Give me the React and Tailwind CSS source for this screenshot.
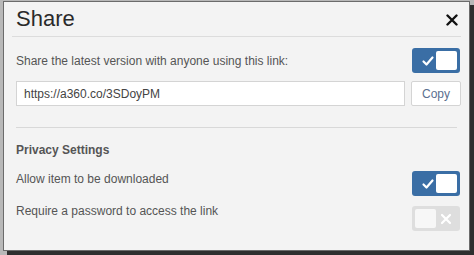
import React from "react";

function Toggle({ on }) {
  if (on) {
    return (
      <div className="w-[48px] h-[25px] rounded-[3px] bg-[#3a6ea5] flex items-center justify-between px-[3px]">
        <svg width="14" height="14" viewBox="0 0 14 14" className="ml-[6px]">
          <path d="M2.5 7.5 L5.5 10.5 L11.5 3.5" stroke="#fff" strokeWidth="2.2" fill="none" strokeLinecap="round" strokeLinejoin="round" />
        </svg>
        <div className="w-[21px] h-[19px] rounded-[2px] bg-white" />
      </div>
    );
  }
  return (
    <div className="w-[48px] h-[25px] rounded-[3px] bg-[#dedede] flex items-center justify-between px-[3px]">
      <div className="w-[21px] h-[19px] rounded-[2px] bg-[#f7f7f7]" />
      <svg width="12" height="12" viewBox="0 0 12 12" className="mr-[5px]">
        <path d="M2 2 L10 10 M10 2 L2 10" stroke="#fff" strokeWidth="2.2" strokeLinecap="round" />
      </svg>
    </div>
  );
}

export default function App() {
  return (
    <div className="w-[474px] h-[255px] bg-[#b8b8b8] pl-[3px] pt-[1px] overflow-hidden" style={{ fontFamily: '"Liberation Sans", Arial, sans-serif' }}>
      <div className="w-[467px] h-[250px] bg-[#f3f3f3] border border-[#6b6b6b] shadow-[4px_4px_0_#2e2e2e] flex flex-col">
        <div className="flex items-center justify-between pl-[12px] pr-[11px] h-[34px]">
          <span className="text-[22px] text-[#2a2a2a] leading-none">Share</span>
          <svg width="12" height="12" viewBox="0 0 12 12" className="mt-[2px]">
            <path d="M1.5 1.5 L10.5 10.5 M10.5 1.5 L1.5 10.5" stroke="#111" strokeWidth="2.4" strokeLinecap="round" />
          </svg>
        </div>
        <div className="mx-[8px] h-px bg-[#dcdcdc]" />
        <div className="pl-[12px] pr-[8px] flex flex-col">
          <div className="flex items-center justify-between mt-[11px] h-[25px]">
            <span className="text-[12px] text-[#555]">Share the latest version with anyone using this link:</span>
            <div className="mr-[1px]"><Toggle on /></div>
          </div>
          <div className="flex items-center mt-[8px] gap-[6px]">
            <div className="w-[389px] h-[25px] bg-white border border-[#d4d4d4] flex items-center pl-[7px] text-[12px] text-[#444]">https://a360.co/3SDoyPM</div>
            <div className="w-[50px] h-[25px] bg-white border border-[#d4d4d4] rounded-[2px] flex items-center justify-center text-[12px] text-[#5a6f8f]">Copy</div>
          </div>
        </div>
        <div className="mx-[12px] mt-[21px] h-px bg-[#d8d8d8]" />
        <div className="pl-[12px] pr-[8px] flex flex-col">
          <span className="mt-[13px] text-[12px] font-bold text-[#555]">Privacy Settings</span>
          <div className="flex items-center justify-between mt-[7px] h-[25px]">
            <span className="text-[12px] text-[#555] mt-0">Allow item to be downloaded</span>
            <div className="mr-[1px] translate-y-[5px]"><Toggle on /></div>
          </div>
          <div className="flex items-center justify-between mt-[10px] h-[25px]">
            <span className="text-[12px] text-[#555] -mt-[6px]">Require a password to access the link</span>
            <div className="mr-[1px] translate-y-[5px]"><Toggle /></div>
          </div>
        </div>
      </div>
    </div>
  );
}
